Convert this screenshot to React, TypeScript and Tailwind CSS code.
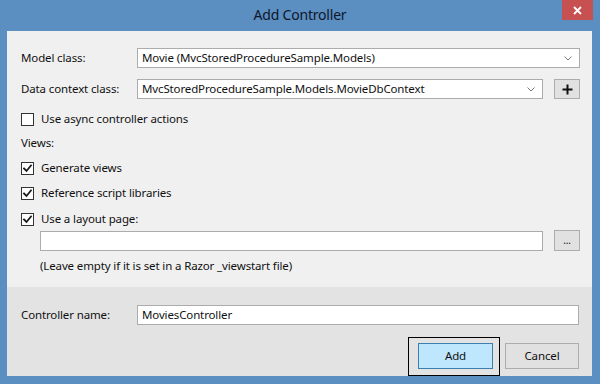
import React from "react";

const Chevron = () => (
  <svg width="8" height="5" viewBox="0 0 8 5" className="shrink-0">
    <path d="M0.5 0.5 L4 4 L7.5 0.5" fill="none" stroke="#7a7a7a" strokeWidth="1" />
  </svg>
);

const Check = () => (
  <svg width="11" height="11" viewBox="0 0 11 11">
    <path d="M2 5.5 L4.5 8 L9 2.5" fill="none" stroke="#1a1a1a" strokeWidth="1.8" strokeLinecap="square" />
  </svg>
);

const CheckBox = ({ label, checked = false }: { label: string; checked?: boolean }) => (
  <div className="flex items-center h-[20px]">
    <div className="w-[13px] h-[13px] border border-[#333] bg-white flex items-center justify-center">
      {checked && <Check />}
    </div>
    <span className="ml-[7px]">{label}</span>
  </div>
);

const Combo = ({ value, className = "" }: { value: string; className?: string }) => (
  <div
    className={`h-[20px] bg-white border border-[#acacac] flex items-center pl-[4px] pr-[7px] ${className}`}
  >
    <span className="flex-1 truncate">{value}</span>
    <Chevron />
  </div>
);

export default function App() {
  return (
    <div
      className="w-[600px] h-[384px] bg-[#5b8ec1] flex flex-col text-[11.5px] tracking-[-0.13px] text-[#111]"
      style={{ fontFamily: '"Noto Sans", "Open Sans", sans-serif' }}
    >
      {/* Title bar */}
      <div className="h-[31px] grid grid-cols-[1fr_auto_1fr] items-start">
        <div />
        <div className="pt-[5px] leading-[20px]">
          <span className="text-[14px] tracking-[-0.2px] text-slate-900">Add Controller</span>
        </div>
        <div className="flex justify-end pr-[7px]">
          <div className="w-[31px] h-[20px] bg-[#c75050] flex items-center justify-center">
            <svg width="9" height="9" viewBox="0 0 9 9">
              <path d="M1 1 L8 8 M8 1 L1 8" stroke="white" strokeWidth="1.8" />
            </svg>
          </div>
        </div>
      </div>

      {/* Client area */}
      <div className="ml-[7px] mr-[8px] h-[345px] flex flex-col">
        <div className="h-[256px] bg-[#f0f0f0] pl-[14px] pr-[12px] pt-[17px]">
          <div className="flex items-center h-[20px]">
            <span className="w-[116px]">Model class:</span>
            <Combo value="Movie (MvcStoredProcedureSample.Models)" className="flex-1" />
          </div>
          <div className="flex items-center h-[20px] mt-[11px]">
            <span className="w-[116px]">Data context class:</span>
            <Combo value="MvcStoredProcedureSample.Models.MovieDbContext" className="flex-1" />
            <div className="ml-[11px] w-[26px] h-[20px] bg-[#e1e1e1] border border-[#adadad] flex items-center justify-center">
              <svg width="11" height="11" viewBox="0 0 11 11">
                <path d="M5.5 0.5 V10.5 M0.5 5.5 H10.5" stroke="#111" strokeWidth="2" />
              </svg>
            </div>
          </div>
          <div className="mt-[10px]">
            <CheckBox label="Use async controller actions" />
          </div>
          <div className="h-[20px] mt-[4px] flex items-center">Views:</div>
          <div className="mt-[5px]">
            <CheckBox label="Generate views" checked />
          </div>
          <div className="mt-[5px]">
            <CheckBox label="Reference script libraries" checked />
          </div>
          <div className="mt-[6px]">
            <CheckBox label="Use a layout page:" checked />
          </div>
          <div className="flex items-center mt-[1px] pl-[19px]">
            <div className="flex-1 h-[20px] bg-white border border-[#acacac]" />
            <div className="ml-[11px] w-[26px] h-[21px] bg-[#e1e1e1] border border-[#adadad] flex items-center justify-center text-[10px] leading-none pb-[2px]">
              ...
            </div>
          </div>
          <div className="mt-[6px] pl-[19px] h-[18px] flex items-center">
            (Leave empty if it is set in a Razor _viewstart file)
          </div>
        </div>

        <div className="flex-1 bg-[#e3e3e3] pl-[14px] pr-[13px] pt-[18px]">
          <div className="flex items-center h-[20px]">
            <span className="w-[116px]">Controller name:</span>
            <div className="flex-1 h-[20px] bg-white border border-[#acacac] flex items-center pl-[4px]">
              MoviesController
            </div>
          </div>
          <div className="flex justify-end items-start mt-[12px]">
            <div className="border border-black pl-[9px] pr-[6px] pt-[5px] pb-[6px]">
              <div className="w-[75px] h-[26px] bg-[#bee6fd] border border-[#3c7fb1] flex items-center justify-center">
                Add
              </div>
            </div>
            <div className="ml-[5px] mt-[6px] w-[74px] h-[26px] bg-[#e1e1e1] border border-[#adadad] flex items-center justify-center">
              Cancel
            </div>
          </div>
        </div>
      </div>
    </div>
  );
}
